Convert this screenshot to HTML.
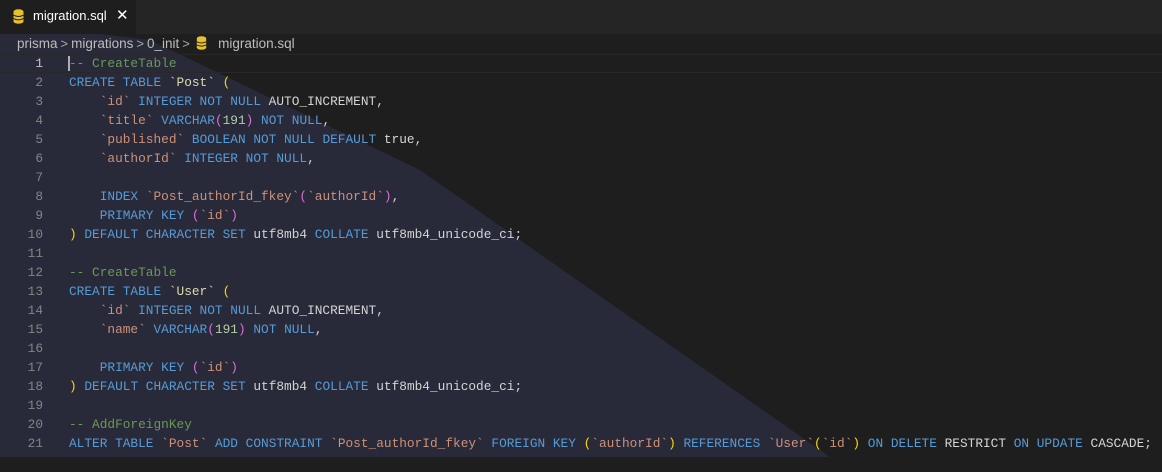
<!DOCTYPE html>
<html><head><meta charset="utf-8"><style>
body{margin:0;width:1162px;height:457px;background:#1e1e1e;overflow:hidden;position:relative;font-family:"Liberation Sans",sans-serif}
.tabs{position:absolute;left:0;top:0;width:1162px;height:34px;background:#252526;z-index:3}
.tab{position:absolute;left:0;top:0;width:136px;height:34px;background:#1e1e1e;color:#fff;font-size:13px}
.ov{position:absolute;left:0;top:0;width:1162px;height:457px;background:#282939;clip-path:polygon(0 34px,100px 34px,150px 40px,420px 170px,830px 457px,0 457px)}
.bc{position:absolute;left:17px;top:36px;font-size:13.5px;color:#bdbdbd;white-space:pre}
.ch{color:#aaa;font-size:13px;margin:0 3px}
.code{position:absolute;left:0;top:54px;font-family:"Liberation Mono",monospace;font-size:12.8px;line-height:19px;white-space:pre}
.ln{position:absolute;left:0;width:43px;text-align:right;color:#858585}
.tx{position:absolute;left:69px;color:#d4d4d4}
.k{color:#569cd6}.s{color:#ce9178}.c{color:#6a9955}.n{color:#b5cea8}.y{color:#ffd700}.p{color:#da70d6}.w{color:#dcdcaa}
.cur{position:absolute;left:0;top:54px;width:1162px;height:17px;border-top:1px solid #282828;border-bottom:1px solid #282828}
</style></head><body>
<div class="tabs"><div class="tab">
<svg style="position:absolute;left:13px;top:9px" width="11" height="15" viewBox="0 0 11 15"><ellipse cx="5.5" cy="2.5" rx="5" ry="2.2" fill="#e8c02a"/><rect x=".5" y="2.5" width="10" height="10" fill="#e8c02a"/><ellipse cx="5.5" cy="12.5" rx="5" ry="2.2" fill="#e8c02a"/><path d="M.5 6.2q5 2.5 10 0M.5 9.6q5 2.5 10 0" stroke="#1e1e1e" fill="none"/></svg>
<span style="position:absolute;left:33px;top:8px">migration.sql</span>
<span style="position:absolute;left:116px;top:6px;font-size:15px">✕</span></div></div>
<div class="ov"></div>
<div class="cur"></div>
<div class="bc">prisma<span class="ch">&gt;</span>migrations<span class="ch">&gt;</span>0_init<span class="ch">&gt;</span><svg width="11" height="14" viewBox="0 0 11 15" style="vertical-align:-2px;margin-left:3px"><ellipse cx="5.5" cy="2.5" rx="5" ry="2.2" fill="#e8c02a"/><rect x=".5" y="2.5" width="10" height="10" fill="#e8c02a"/><ellipse cx="5.5" cy="12.5" rx="5" ry="2.2" fill="#e8c02a"/><path d="M.5 6.2q5 2.5 10 0M.5 9.6q5 2.5 10 0" stroke="#1e1e1e" fill="none"/></svg>   migration.sql</div>
<div class="code">
<div class="ln" style="top:0;color:#c6c6c6">1</div><div class="tx" style="top:0"><span class="c">-- CreateTable</span></div>
<div class="ln" style="top:19px">2</div><div class="tx" style="top:19px"><span class="k">CREATE TABLE</span> <span class="w">`Post`</span> <span class="y">(</span></div>
<div class="ln" style="top:38px">3</div><div class="tx" style="top:38px">    <span class="s">`id`</span> <span class="k">INTEGER NOT NULL</span> AUTO_INCREMENT,</div>
<div class="ln" style="top:57px">4</div><div class="tx" style="top:57px">    <span class="s">`title`</span> <span class="k">VARCHAR</span><span class="p">(</span><span class="n">191</span><span class="p">)</span> <span class="k">NOT NULL</span>,</div>
<div class="ln" style="top:76px">5</div><div class="tx" style="top:76px">    <span class="s">`published`</span> <span class="k">BOOLEAN NOT NULL DEFAULT</span> true,</div>
<div class="ln" style="top:95px">6</div><div class="tx" style="top:95px">    <span class="s">`authorId`</span> <span class="k">INTEGER NOT NULL</span>,</div>
<div class="ln" style="top:114px">7</div>
<div class="ln" style="top:133px">8</div><div class="tx" style="top:133px">    <span class="k">INDEX</span> <span class="s">`Post_authorId_fkey`</span><span class="p">(</span><span class="s">`authorId`</span><span class="p">)</span>,</div>
<div class="ln" style="top:152px">9</div><div class="tx" style="top:152px">    <span class="k">PRIMARY KEY</span> <span class="p">(</span><span class="s">`id`</span><span class="p">)</span></div>
<div class="ln" style="top:171px">10</div><div class="tx" style="top:171px"><span class="y">)</span> <span class="k">DEFAULT CHARACTER SET</span> utf8mb4 <span class="k">COLLATE</span> utf8mb4_unicode_ci;</div>
<div class="ln" style="top:190px">11</div>
<div class="ln" style="top:209px">12</div><div class="tx" style="top:209px"><span class="c">-- CreateTable</span></div>
<div class="ln" style="top:228px">13</div><div class="tx" style="top:228px"><span class="k">CREATE TABLE</span> <span class="w">`User`</span> <span class="y">(</span></div>
<div class="ln" style="top:247px">14</div><div class="tx" style="top:247px">    <span class="s">`id`</span> <span class="k">INTEGER NOT NULL</span> AUTO_INCREMENT,</div>
<div class="ln" style="top:266px">15</div><div class="tx" style="top:266px">    <span class="s">`name`</span> <span class="k">VARCHAR</span><span class="p">(</span><span class="n">191</span><span class="p">)</span> <span class="k">NOT NULL</span>,</div>
<div class="ln" style="top:285px">16</div>
<div class="ln" style="top:304px">17</div><div class="tx" style="top:304px">    <span class="k">PRIMARY KEY</span> <span class="p">(</span><span class="s">`id`</span><span class="p">)</span></div>
<div class="ln" style="top:323px">18</div><div class="tx" style="top:323px"><span class="y">)</span> <span class="k">DEFAULT CHARACTER SET</span> utf8mb4 <span class="k">COLLATE</span> utf8mb4_unicode_ci;</div>
<div class="ln" style="top:342px">19</div>
<div class="ln" style="top:361px">20</div><div class="tx" style="top:361px"><span class="c">-- AddForeignKey</span></div>
<div class="ln" style="top:380px">21</div><div class="tx" style="top:380px"><span class="k">ALTER TABLE</span> <span class="s">`Post`</span> <span class="k">ADD CONSTRAINT</span> <span class="s">`Post_authorId_fkey`</span> <span class="k">FOREIGN KEY</span> <span class="y">(</span><span class="s">`authorId`</span><span class="y">)</span> <span class="k">REFERENCES</span> <span class="s">`User`</span><span class="y">(</span><span class="s">`id`</span><span class="y">)</span> <span class="k">ON DELETE</span> RESTRICT <span class="k">ON UPDATE</span> CASCADE;</div>
</div>
<div style="position:absolute;left:68px;top:56px;width:2px;height:15px;background:#aeafad"></div>
</body></html>
